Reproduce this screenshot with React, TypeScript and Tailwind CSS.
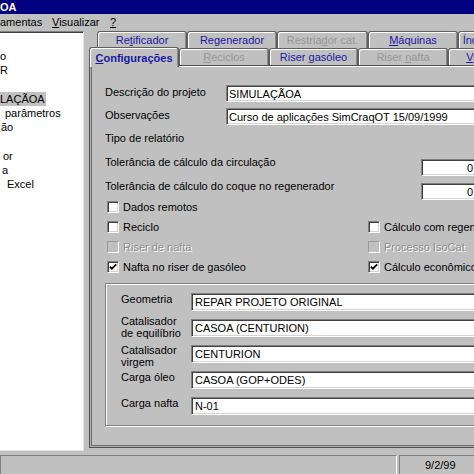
import React from "react";

const FONT = "font-['Liberation_Sans',Arial,Helvetica,sans-serif]";

function U({ children }: { children: React.ReactNode }) {
  return <span className="underline underline-offset-[1px] decoration-1">{children}</span>;
}

function Tab({
  children,
  disabled,
  selected,
  w = "w-[90px]",
}: {
  children: React.ReactNode;
  disabled?: boolean;
  selected?: boolean;
  w?: string;
}) {
  const base =
    "shrink-0 flex items-center justify-center whitespace-nowrap rounded-t-[3px] border-t border-l border-r border-[#5e5e5e] bg-[#c0c0c0] shadow-[inset_1px_1px_0_#ffffff,inset_-1px_0_0_#8a8a8a]";
  const color = disabled ? "text-[#979797]" : "text-[#1818a0]";
  if (selected) {
    return (
      <div className={`${base} ${w} ${color} h-[20px] -mb-[2px] relative z-10 font-bold`}>
        <span>{children}</span>
      </div>
    );
  }
  return (
    <div className={`${base} ${w} ${color} h-[17px]`}>
      <span>{children}</span>
    </div>
  );
}

function Input({ children, className = "" }: { children?: React.ReactNode; className?: string }) {
  return (
    <div
      className={`bg-white border border-t-[#808080] border-l-[#808080] border-b-white border-r-white shadow-[inset_1px_1px_0_#404040,inset_-1px_-1px_0_#d4d4d4] flex items-center whitespace-nowrap overflow-hidden ${className}`}
    >
      <span>{children}</span>
    </div>
  );
}

function Check({ checked, disabled, label }: { checked?: boolean; disabled?: boolean; label: string }) {
  return (
    <div className="flex items-center gap-[4px] h-[20px] whitespace-nowrap">
      <span
        className={`w-[12px] h-[12px] shrink-0 flex items-center justify-center border ${
          disabled
            ? "bg-[#c0c0c0] border-t-[#9a9a9a] border-l-[#9a9a9a] border-b-white border-r-white"
            : "bg-white border-t-[#808080] border-l-[#808080] border-b-white border-r-white shadow-[inset_1px_1px_0_#404040,inset_-1px_-1px_0_#d4d4d4]"
        }`}
      >
        {checked && (
          <svg width="8" height="8" viewBox="0 0 8 8">
            <polyline points="0.8,3.6 2.9,5.7 7.2,1.3" fill="none" stroke="#000" strokeWidth="1.7" />
          </svg>
        )}
      </span>
      <span className={disabled ? "text-[#8e8e8e] [text-shadow:1px_1px_0_#ffffff]" : ""}>{label}</span>
    </div>
  );
}

export default function App() {
  const treeRows: { text: string; pl: string; sel?: boolean }[] = [
    { text: "o", pl: "pl-0" },
    { text: "R", pl: "pl-0" },
    { text: "", pl: "pl-0" },
    { text: "LAÇÃOA", pl: "pl-0", sel: true },
    { text: "parâmetros", pl: "pl-[5px]" },
    { text: "ão", pl: "pl-[1px]" },
    { text: "", pl: "pl-0" },
    { text: "or", pl: "pl-[3px]" },
    { text: "a", pl: "pl-[2px]" },
    { text: "Excel", pl: "pl-[7px]" },
  ];

  return (
    <div
      className={`w-[474px] h-[474px] overflow-hidden bg-[#c0c0c0] text-[11px] leading-[14px] text-black flex flex-col ${FONT}`}
    >
      {/* Title bar */}
      <div className="h-[14px] shrink-0 bg-[#000080] text-white font-bold flex items-center leading-[14px]">
        OA
      </div>

      {/* Menu bar */}
      <div className="h-[16px] shrink-0 flex items-center">
        <span className="w-[52px]">amentas</span>
        <span className="w-[58px]">
          <U>V</U>isualizar
        </span>
        <span>
          <U>?</U>
        </span>
      </div>

      {/* Main area */}
      <div className="h-[422px] shrink-0 flex">
        {/* Tree */}
        <div className="w-[84px] h-[420px] mt-[1px] shrink-0 bg-white border-t border-t-[#808080] border-r border-r-[#e4e4e4] border-b border-b-[#e4e4e4] shadow-[inset_0_1px_0_#404040] pt-[17px] overflow-hidden">
          {treeRows.map((r, i) => (
            <div key={i} className={`h-[14.25px] flex items-center whitespace-nowrap ${r.pl}`}>
              {r.sel ? <span className="bg-[#c0c0c0] pr-[1px] h-[14px] flex items-center">{r.text}</span> : <span>{r.text}</span>}
            </div>
          ))}
        </div>

        {/* Tab control */}
        <div className="ml-[5px] w-[420px] shrink-0 pt-[1px] flex flex-col">
          {/* Back row */}
          <div className="h-[17px] flex items-end pl-[8px]">
            <Tab>
              Re<U>t</U>ificador
            </Tab>
            <Tab>
              Re<U>g</U>enerador
            </Tab>
            <Tab disabled w="w-[91px]">
              Restria<U>d</U>or cat.
            </Tab>
            <Tab>
              <U>M</U>áquinas
            </Tab>
            <Tab>Índices de preço</Tab>
          </div>
          {/* Front row */}
          <div className="h-[17px] flex items-end">
            <Tab selected w="w-[90px]">
              <U>C</U>onfigurações
            </Tab>
            <Tab disabled>
              <U>R</U>eciclos
            </Tab>
            <Tab w="w-[89px]">
              Riser <U>g</U>asóleo
            </Tab>
            <Tab disabled>
              Riser <U>n</U>afta
            </Tab>
            <Tab>
              <U>V</U>iabilidade
            </Tab>
          </div>

          {/* Page */}
          <div className="h-[383px] border border-[#4e4e4e] bg-[#b2b2b2] pl-px pb-px">
            <div className="h-full border-t border-t-white border-l border-b border-l-[#6c6c6c] border-b-[#6c6c6c] bg-[#c0c0c0] pl-[13px] flex flex-col">
              {/* Descrição */}
              <div className="mt-[18px] flex items-start h-[17px]">
                <span className="w-[121px] shrink-0">Descrição do projeto</span>
                <Input className="flex-1 h-[17px] pl-[2px]">SIMULAÇÃOA</Input>
              </div>
              {/* Observações */}
              <div className="mt-[6px] flex items-start h-[17px]">
                <span className="w-[121px] shrink-0">Observações</span>
                <Input className="flex-1 h-[17px] pl-[2px]">Curso de aplicações SimCraqOT 15/09/1999</Input>
              </div>
              {/* Tipo */}
              <div className="mt-[6px] h-[14px]">Tipo de relatório</div>
              {/* Tolerances */}
              <div className="mt-[10px] flex items-start h-[21px]">
                <span className="w-[316px] shrink-0">Tolerância de cálculo da circulação</span>
                <Input className="mt-[4px] w-[57px] h-[17px] justify-end pr-[4px] shrink-0">0</Input>
              </div>
              <div className="mt-[3px] flex items-start h-[21px]">
                <span className="w-[316px] shrink-0">Tolerância de cálculo do coque no regenerador</span>
                <Input className="mt-[4px] w-[57px] h-[17px] justify-end pr-[4px] shrink-0">0</Input>
              </div>
              {/* Checkboxes */}
              <div className="-mt-[3px] pl-[2px] grid grid-cols-[261px_1fr]">
                <Check label="Dados remotos" />
                <div />
                <Check label="Reciclo" />
                <Check label="Cálculo com regenerador" />
                <Check label="Riser de nafta" disabled />
                <Check label="Processo IsoCat" disabled />
                <Check label="Nafta no riser de gasóleo" checked />
                <Check label="Cálculo econômico" checked />
              </div>
              {/* Group box */}
              <div className="mt-[6px] border border-[#808080] shadow-[inset_1px_1px_0_#ffffff,1px_1px_0_#ffffff] pt-[9px] pb-[10px] pl-[15px] flex flex-col">
                <div className="flex items-start h-[26px]">
                  <span className="w-[70px] shrink-0 leading-[13px]">Geometria</span>
                  <Input className="flex-1 h-[18px] pl-[3px]">REPAR PROJETO ORIGINAL</Input>
                </div>
                <div className="flex items-start h-[26px]">
                  <span className="w-[70px] shrink-0 leading-[12px] -mt-[4px]">
                    Catalisador
                    <br />
                    de equilíbrio
                  </span>
                  <Input className="flex-1 h-[18px] pl-[3px]">CASOA (CENTURION)</Input>
                </div>
                <div className="flex items-start h-[26px]">
                  <span className="w-[70px] shrink-0 leading-[12px] -mt-[1px]">
                    Catalisador
                    <br />
                    virgem
                  </span>
                  <Input className="flex-1 h-[18px] pl-[3px]">CENTURION</Input>
                </div>
                <div className="flex items-start h-[26px]">
                  <span className="w-[70px] shrink-0 leading-[13px]">Carga óleo</span>
                  <Input className="flex-1 h-[18px] pl-[3px]">CASOA (GOP+ODES)</Input>
                </div>
                <div className="flex items-start h-[18px]">
                  <span className="w-[70px] shrink-0 leading-[13px]">Carga nafta</span>
                  <Input className="flex-1 h-[18px] pl-[3px]">N-01</Input>
                </div>
              </div>
            </div>
          </div>
        </div>
      </div>

      {/* Status bar */}
      <div className="flex-1 flex pt-[3px] gap-[2px]">
        <div className="w-[397px] shrink-0 border-t border-l border-t-[#808080] border-l-[#808080] border-r border-r-white" />
        <div className="flex-1 border-t border-l border-t-[#808080] border-l-[#808080] pl-[25px] flex items-center pb-[1px]">
          9/2/99
        </div>
      </div>
    </div>
  );
}
